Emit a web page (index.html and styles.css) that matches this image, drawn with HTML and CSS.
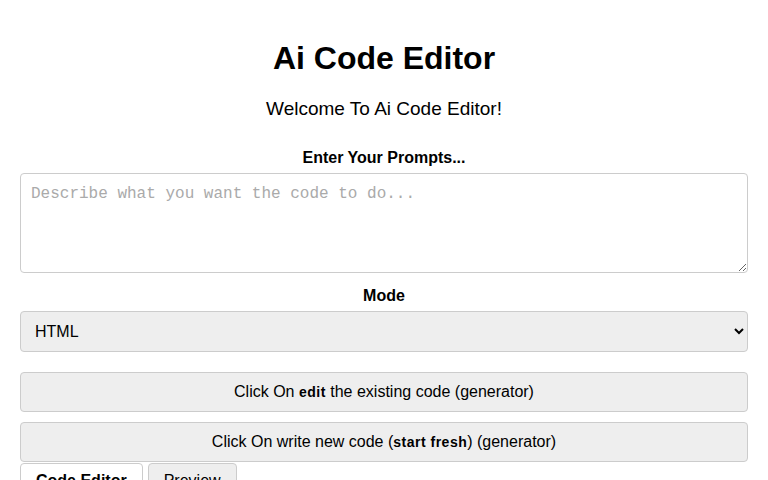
FILE: index.html
```html
<!DOCTYPE html>
<html>
<head>
<meta charset="utf-8">
<link rel="stylesheet" href="styles.css">
</head>
<body>
<div class="container">
  <h1 class="title">Ai Code Editor</h1>
  <p class="subtitle">Welcome To Ai Code Editor!</p>
  <label class="label" for="prompt">Enter Your Prompts...</label>
  <textarea id="prompt" class="prompt" placeholder="Describe what you want the code to do..."></textarea>
  <label class="label" for="mode">Mode</label>
  <select id="mode" class="mode">
    <option>HTML</option>
  </select>
  <button class="btn btn-first">Click On <strong class="kw">edit</strong> the existing code (generator)</button>
  <button class="btn">Click On write new code (<strong class="kw">start fresh</strong>) (generator)</button>
  <div class="tabs">
    <button class="tab active">Code Editor</button>
    <button class="tab">Preview</button>
  </div>
</div>
</body>
</html>
```

FILE: styles.css
```css
* { box-sizing: border-box; }
html, body { margin: 0; padding: 0; background: #fff; }
body { font-family: "Liberation Sans", Arial, sans-serif; color: #000; }
.container {
  padding: 20px 20px 0;
  display: flex;
  flex-direction: column;
}
.title {
  margin: 20px 0 0;
  font-size: 32px;
  line-height: 37px;
  font-weight: bold;
  text-align: center;
}
.subtitle {
  margin: 20px 0 0;
  font-size: 19px;
  line-height: 24px;
  text-align: center;
}
.label {
  display: block;
  margin-top: 28px;
  font-size: 16px;
  font-weight: bold;
  text-align: center;
  line-height: 18px;
}
.prompt {
  display: block;
  width: 100%;
  height: 100px;
  margin-top: 6px;
  padding: 11px 10px 10px;
  border: 1px solid #ccc;
  border-radius: 4px;
  font-family: "Liberation Mono", "Courier New", monospace;
  font-size: 16px;
  line-height: 19px;
  resize: vertical;
}
.prompt::placeholder { color: #aaa; }
.prompt + .label { margin-top: 14px; }
.mode {
  display: block;
  width: 100%;
  height: 41px;
  margin-top: 6px;
  padding: 0 10px;
  background: #eee;
  border: 1px solid #ccc;
  border-radius: 4px;
  font-family: "Liberation Sans", Arial, sans-serif;
  font-size: 16px;
  color: #000;
}
.btn {
  display: block;
  width: 100%;
  height: 40px;
  margin-top: 10px;
  background: #eee;
  border: 1px solid #ccc;
  border-radius: 4px;
  font-family: "Liberation Sans", Arial, sans-serif;
  font-size: 16px;
  color: #000;
}
.btn-first { margin-top: 20px; }
.kw { font-size: 14px; letter-spacing: 0.5px; }
.tabs {
  display: flex;
  gap: 5px;
  margin-top: 1px;
}
.tab {
  height: 36px;
  padding: 0 15px;
  background: #eee;
  border: 1px solid #ccc;
  border-radius: 4px 4px 0 0;
  font-family: "Liberation Sans", Arial, sans-serif;
  font-size: 16px;
  color: #000;
  align-self: flex-start;
}
.tab.active { background: #fff; font-weight: bold; }
```
